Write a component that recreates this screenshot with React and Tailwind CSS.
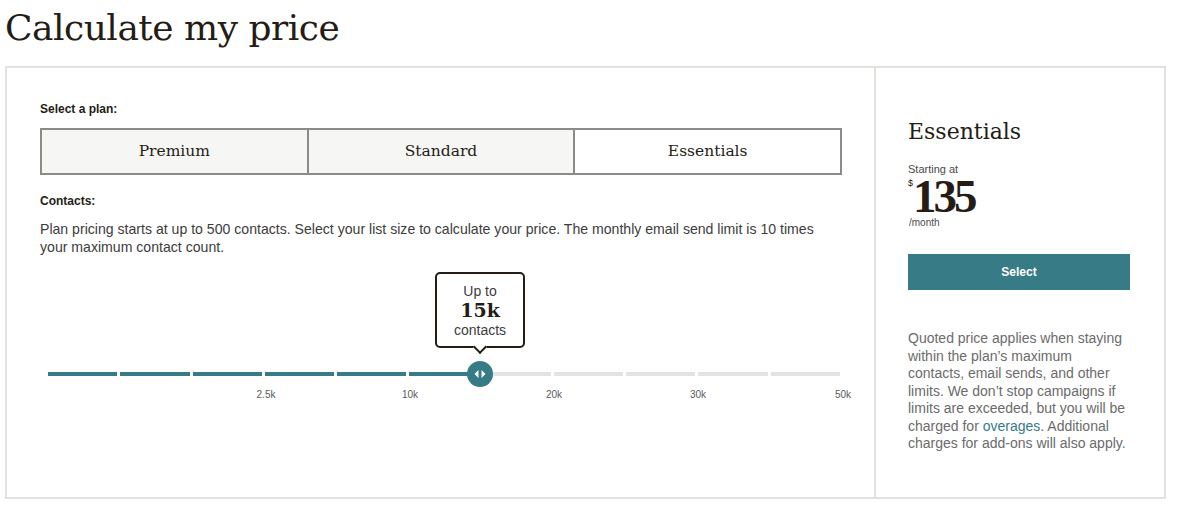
import React from "react";

const serif = { fontFamily: '"DejaVu Serif", "Liberation Serif", serif' };

function Thumb() {
  return (
    <div className="absolute left-[419px] top-[89px] w-[26px] h-[26px] rounded-full bg-[#367b85] flex items-center justify-center">
      <svg width="12" height="8" viewBox="0 0 12 8">
        <polygon points="4.5,0 4.5,8 0.5,4" fill="#fff" />
        <polygon points="7.5,0 7.5,8 11.5,4" fill="#fff" />
      </svg>
    </div>
  );
}

function Tooltip() {
  return (
    <div className="absolute left-[387px] top-0 w-[90px] h-[76px] border-2 border-[#241c15] rounded-[5px] bg-white flex flex-col items-center justify-center">
      <div className="text-[14px] leading-[18px] text-[#3c3c3c]">Up to</div>
      <div className="text-[19px] leading-[21px] font-bold text-[#241c15]" style={serif}>15k</div>
      <div className="text-[14px] leading-[18px] text-[#3c3c3c]">contacts</div>
      <div className="absolute left-1/2 -bottom-[6px] -ml-[5px] w-[10px] h-[10px] rotate-45 bg-white border-r-2 border-b-2 border-[#241c15]"></div>
    </div>
  );
}

export default function App() {
  const segs = Array.from({ length: 11 });
  const labels = [
    { t: "2.5k", i: 3 },
    { t: "10k", i: 5 },
    { t: "20k", i: 7 },
    { t: "30k", i: 9 },
    { t: "50k", i: 11 },
  ];
  const note = [
    "Quoted price applies when staying",
    "within the plan’s maximum",
    "contacts, email sends, and other",
    "limits. We don’t stop campaigns if",
    "limits are exceeded, but you will be",
  ];
  return (
    <div
      className="w-[1184px] h-[505px] bg-white text-[#241c15] overflow-hidden"
      style={{ fontFamily: '"Liberation Sans", Arial, sans-serif' }}
    >
      <h1 className="pl-[5px] pt-[3px] text-[36px] leading-[50px] h-[66px] tracking-[-0.5px] text-[#241c15]" style={serif}>
        Calculate my price
      </h1>
      <div className="ml-[5px] w-[1161px] h-[433px] border-2 border-[#e3e1dd] flex">
        <div className="w-[869px] border-r-2 border-[#e3e1dd] pl-[33px] pr-[32px] pt-[33px]">
          <div className="text-[12px] leading-[16px] font-bold">Select a plan:</div>
          <div className="mt-[11px] h-[47px] flex border-2 border-[#8d8b88]">
            <div className="flex-1 bg-[#f6f6f4] flex items-center justify-center text-[15.5px]" style={serif}>Premium</div>
            <div className="flex-1 bg-[#f6f6f4] flex items-center justify-center text-[15.5px] border-l-2 border-[#8d8b88]" style={serif}>Standard</div>
            <div className="flex-1 bg-white flex items-center justify-center text-[15.5px] border-l-2 border-[#8d8b88]" style={serif}>Essentials</div>
          </div>
          <div className="mt-[18px] text-[12px] leading-[16px] font-bold">Contacts:</div>
          <p className="mt-[11px] text-[14.1px] leading-[18px] text-[#3c3c3c] w-[790px]">
            Plan pricing starts at up to 500 contacts. Select your list size to calculate your price. The monthly email send limit is 10 times your maximum contact count.
          </p>
          <div className="relative mt-[16px] ml-[8px] w-[792px]">
            <Tooltip />
            <div className="pt-[100px] flex gap-[3px]">
              {segs.map((_, i) => (
                <div key={i} className={"flex-1 h-[4px] " + (i < 6 ? "bg-[#367b85]" : "bg-[#e3e3e3]")}></div>
              ))}
            </div>
            <div className="relative h-[30px]">
              {labels.map((l) => (
                <span
                  key={l.t}
                  className="absolute top-[13px] -translate-x-1/2 text-[10px] leading-[12px] text-[#5a5a5a]"
                  style={{ left: `${(l.i / 11) * 792 + (l.i === 11 ? 3 : 2)}px` }}
                >
                  {l.t}
                </span>
              ))}
            </div>
            <Thumb />
          </div>
        </div>
        <div className="flex-1 pl-[32px] pr-[20px] pt-[50px]">
          <div className="text-[22px] leading-[28px] text-[#241c15]" style={serif}>Essentials</div>
          <div className="mt-[17px] text-[11px] leading-[13px] text-[#4a4a4a]">Starting at</div>
          <div className="flex items-start h-[40px]">
            <span className="text-[9px] leading-[10px] mt-[2px] text-[#241c15]">$</span>
            <span className="text-[47px] leading-[40px] font-bold tracking-[-3px] text-[#241c15]" style={{ fontFamily: '"Liberation Serif", serif' }}>135</span>
          </div>
          <div className="mt-[1px] ml-[1px] text-[10px] leading-[12px] text-[#4a4a4a]">/month</div>
          <button className="mt-[25px] w-[222px] h-[36px] bg-[#367b85] text-white text-[12px] font-bold">Select</button>
          <p className="mt-[40px] text-[14px] leading-[17.5px] text-[#6b6b6b]">
            {note.map((n) => (
              <span key={n} className="block whitespace-nowrap">{n}</span>
            ))}
            <span className="block whitespace-nowrap">
              charged for <span className="text-[#367b85]">overages</span>. Additional
            </span>
            <span className="block whitespace-nowrap">charges for add-ons will also apply.</span>
          </p>
        </div>
      </div>
    </div>
  );
}
